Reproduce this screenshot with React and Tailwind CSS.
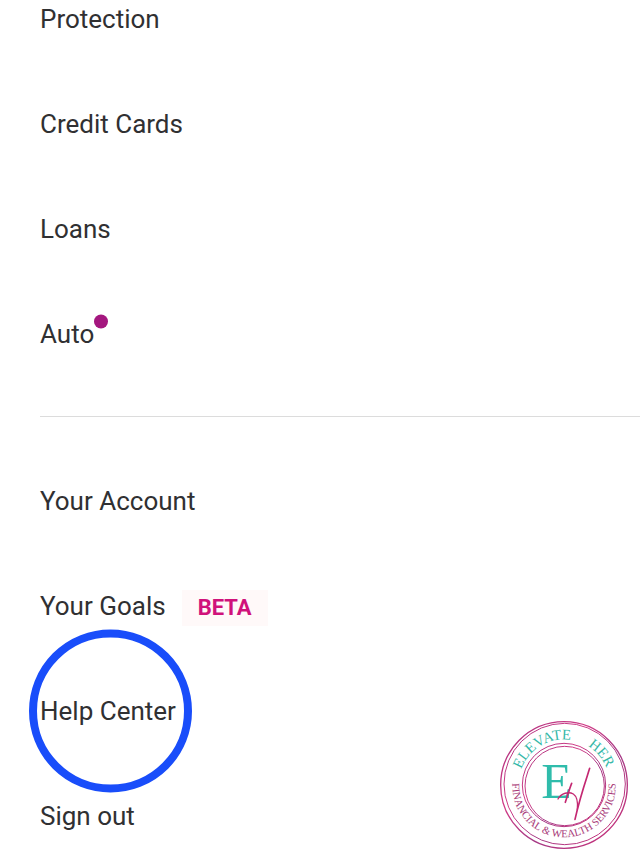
import React from 'react';

const productLinks = [
  { label: 'Protection', href: '#protection' },
  { label: 'Credit Cards', href: '#credit-cards' },
  { label: 'Loans', href: '#loans' },
  { label: 'Auto', href: '#auto', isNew: true },
];

const accountLinks = [
  { label: 'Your Account', href: '#account' },
  { label: 'Your Goals', href: '#goals', tag: 'BETA' },
  { label: 'Help Center', href: '#help', highlighted: true },
  { label: 'Sign out', href: '#sign-out' },
];

const MenuItem = ({ item }) => (
  <li className="flex h-8 items-center">
    <a href={item.href} className="relative whitespace-nowrap">
      {item.label}
      {item.isNew && (
        <span className="absolute left-full top-0 size-[14px] -translate-y-1/4 rounded-full bg-[#a4177f]" />
      )}
      {item.highlighted && (
        <span className="pointer-events-none absolute -left-[11px] top-1/2 size-[163px] -translate-y-1/2 rounded-full border-8 border-[#194dfa]" />
      )}
    </a>
    {item.tag && (
      <span className="mt-1 ml-4 bg-[#fff9f9] px-4 text-[22px] leading-9 font-bold text-[#d0127b]">
        {item.tag}
      </span>
    )}
  </li>
);

const Menu = ({ items }) => (
  <ul className="flex flex-col gap-[73px]">
    {items.map((item) => (
      <MenuItem key={item.label} item={item} />
    ))}
  </ul>
);

const BrandSeal = () => (
  <svg
    viewBox="0 0 384 384"
    className="pointer-events-none absolute right-3 bottom-1 size-32 overflow-visible font-['Liberation_Serif',serif]"
    role="img"
    aria-label="Elevate Her Financial & Wealth Services"
  >
    <defs>
      <linearGradient id="ring" x1="0" y1="0" x2="1" y2="1">
        <stop offset="0" stopColor="#a8327f" />
        <stop offset="0.35" stopColor="#d03a86" />
        <stop offset="0.6" stopColor="#a53a86" />
        <stop offset="1" stopColor="#cf2f78" />
      </linearGradient>
      <path id="arc-top" d="M55 192 A137 137 0 0 1 329 192" />
      <path id="arc-bottom" d="M42 155 A155 155 0 1 0 342 155" />
    </defs>

    <g fill="none" stroke="url(#ring)">
      <circle cx="192" cy="192" r="190" strokeWidth="4" />
      <circle cx="194" cy="189" r="182" strokeWidth="3" />
      <circle cx="192" cy="192" r="125" strokeWidth="3" />
      <circle cx="194" cy="195" r="119" strokeWidth="3" />
    </g>

    <g fill="#35b8a8" fontSize="44">
      <text>
        <textPath href="#arc-top" startOffset="48">ELEVATE</textPath>
      </text>
      <text>
        <textPath href="#arc-top" startOffset="290">HER</textPath>
      </text>
    </g>
    <text fill="#a83a78" fontSize="32" textAnchor="middle">
      <textPath href="#arc-bottom" startOffset="50%">FINANCIAL &amp; WEALTH SERVICES</textPath>
    </text>

    <text x="124" y="231" fontSize="150" fill="#2fbcab">E</text>
    <g fill="none" stroke="#c42872" strokeLinecap="round">
      <path d="M269 142 C257 180 240 228 225 295" strokeWidth="5" />
      <path d="M215 187 C208 204 204 220 196 244" strokeWidth="5" />
      <path d="M174 234 C184 216 206 211 220 219 C232 227 234 246 232 266" strokeWidth="4" />
    </g>
  </svg>
);

export default function App() {
  return (
    <div className="relative min-h-screen overflow-hidden bg-white pt-[3px] pl-10 font-[Roboto,sans-serif] text-[26px] leading-8 text-[#303032]">
      <nav aria-label="Main menu">
        <Menu items={productLinks} />
        <hr className="mt-[66px] mb-[68px] border-[#dcdcdc]" />
        <Menu items={accountLinks} />
      </nav>
      <BrandSeal />
    </div>
  );
}
